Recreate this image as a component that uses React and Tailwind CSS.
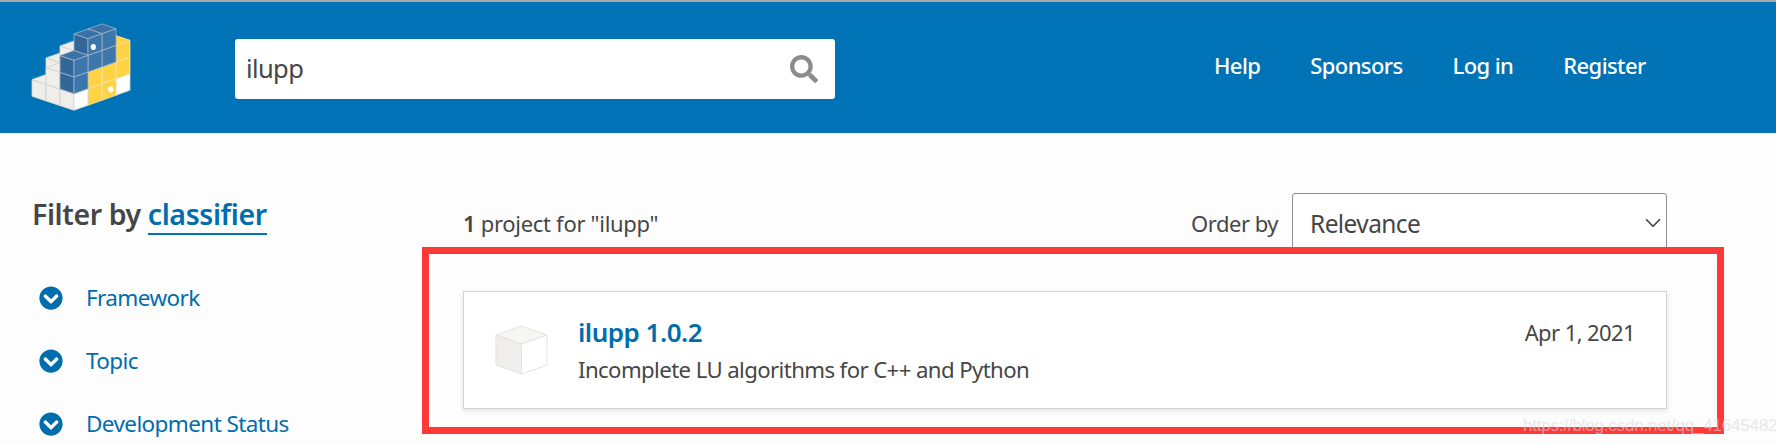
import { FaSearch, FaChevronCircleDown } from 'react-icons/fa'
import { ChevronDown } from 'lucide-react'

const BLUE = { top: '#3a72a8', left: '#336797', right: '#3b76ad', line: '#9fb3c6' }
const YELLOW = { top: '#ffd343', left: '#ffd343', right: '#ffd343', line: '#f3e4a8' }
const GRAY = { top: '#efeeea', left: '#efeeea', right: '#ffffff', line: '#d2d2d0' }
const WHITE = { top: '#ffffff', left: '#efeeea', right: '#ffffff', line: '#d2d2d0' }

const cubes = [
  [0, 0, 0, GRAY], [0, 1, 0, GRAY], [0, 2, 0, GRAY], [0, 1, 1, GRAY],
  [1, 2, 0, GRAY], [1, 2, 1, GRAY], [1, 1, 0, GRAY], [1, 1, 1, GRAY], [1, 1, 2, GRAY],
  [0, 0, 1, BLUE], [0, 0, 2, BLUE],
  [1, 0, 0, YELLOW], [1, 0, 1, YELLOW], [1, 0, 2, BLUE], [1, 0, 3, BLUE],
  [2, 0, 0, YELLOW], [2, 0, 1, YELLOW], [2, 0, 2, BLUE], [2, 0, 3, BLUE],
  [3, 0, 0, WHITE], [3, 0, 1, YELLOW], [3, 0, 2, YELLOW],
].sort((a, b) => b[0] + b[1] - (a[0] + a[1]) || a[2] - b[2])

const pt = (x, y, z) => `${74 + 14 * (x - y)},${108.3 - 5 * x - 4.67 * y - 16.67 * z}`

function Logo() {
  return (
    <svg width="100" height="90" viewBox="31 21 100 90" className="block shrink-0">
      {cubes.map(([x, y, z, c]) => (
        <g key={`${x}-${y}-${z}`} stroke={c.line} strokeWidth="0.8" strokeLinejoin="round">
          <polygon fill={c.left} points={`${pt(x, y, z)} ${pt(x, y + 1, z)} ${pt(x, y + 1, z + 1)} ${pt(x, y, z + 1)}`} />
          <polygon fill={c.right} points={`${pt(x, y, z)} ${pt(x + 1, y, z)} ${pt(x + 1, y, z + 1)} ${pt(x, y, z + 1)}`} />
          <polygon fill={c.top} points={`${pt(x, y, z + 1)} ${pt(x + 1, y, z + 1)} ${pt(x + 1, y + 1, z + 1)} ${pt(x, y + 1, z + 1)}`} />
        </g>
      ))}
      <ellipse cx="93.3" cy="45" rx="2.6" ry="3.1" fill="#fff" />
      <ellipse cx="110.7" cy="87.3" rx="2.6" ry="3.1" fill="#fff" />
    </svg>
  )
}

function PackageCube() {
  return (
    <svg width="53" height="50" viewBox="494 326 53 50" className="block shrink-0">
      <g stroke="#e3e3e0" strokeWidth="1" strokeLinejoin="round">
        <polygon fill="#f6f6f4" points="520,327 546,336 520.5,345 495,336" />
        <polygon fill="#efeeec" points="495,336 520.5,345 520.5,375 495,366" />
        <polygon fill="#ffffff" points="546,336 520.5,345 520.5,375 546,366" />
      </g>
    </svg>
  )
}

const navLinks = [
  { label: 'Help', cls: 'mr-[50px]' },
  { label: 'Sponsors', cls: 'mr-[50px]' },
  { label: 'Log in', cls: 'mr-[50px]' },
  { label: 'Register', cls: '' },
]

const filters = ['Framework', 'Topic', 'Development Status']

export default function App() {
  return (
    <div className="relative h-[444px] w-[1776px] overflow-hidden bg-[#fdfdfd] text-[#464646] font-['Noto_Sans','Liberation_Sans',sans-serif]">
      {/* header */}
      <header className="flex h-[133px] items-center border-t-2 border-[#a9a9a9] bg-[#0073b7] pl-[31px]">
        <Logo />
        <div className="ml-[104px] mt-[2px] flex h-[60px] w-[600px] items-center justify-between rounded-[3px] bg-white pl-[11px] pr-[17px]">
          <span className="text-[25.5px] tracking-[-0.6px]">ilupp</span>
          <FaSearch className="text-[28px] text-[#8c8c8c]" />
        </div>
        <nav className="mb-[5px] ml-[379px] flex text-[22px] font-medium tracking-[-0.6px] text-white">
          {navLinks.map(l => (
            <a key={l.label} className={l.cls}>{l.label}</a>
          ))}
        </nav>
      </header>

      <main className="flex">
        {/* sidebar */}
        <aside className="w-[463px] shrink-0 pl-[32px] pt-[59px]">
          <h2 className="text-[28.5px] leading-[44px] font-semibold tracking-[-0.4px]">
            Filter by <a className="border-b-2 border-[#0073b7] text-[#006dad]">classifier</a>
          </h2>
          <ul className="mt-[46px] pl-[7px]">
            {filters.map(f => (
              <li key={f} className="mb-[31px] flex h-[32px] items-center gap-[23px] text-[22.5px] tracking-[-0.6px] text-[#006dad]">
                <FaChevronCircleDown className="shrink-0 text-[24px]" />
                {f}
              </li>
            ))}
          </ul>
        </aside>

        {/* results */}
        <section className="w-[1204px] shrink-0">
          <div className="flex h-[158px] items-start justify-between pt-[60px]">
            <p className="mt-[14px] text-[22px] tracking-[-0.3px]"><b className="font-semibold">1</b> project for "ilupp"</p>
            <div className="flex items-center">
              <span className="text-[22px] tracking-[-0.5px]">Order by</span>
              <div className="ml-[14px] flex h-[60px] w-[375px] items-center justify-between rounded-[3px] border border-[#8e8e8e] bg-white pl-[17px] text-[24.5px] tracking-[-0.6px]">
                <span className="mt-[2px]">Relevance</span>
                <ChevronDown size={26} strokeWidth={1.6} className="text-[#464646]" />
              </div>
            </div>
          </div>
          <div className="flex h-[118px] items-start border border-[#d3d3d3] bg-white shadow-[0_2px_5px_rgba(0,0,0,0.1)]">
            <div className="flex h-full items-center pl-[31px] pr-[30px]">
              <PackageCube />
            </div>
            <div className="flex-1 pt-[24px]">
              <h3 className="text-[26px] leading-[32px] font-semibold tracking-[-0.5px] text-[#006dad]">ilupp 1.0.2</h3>
              <p className="mt-[7px] text-[22.2px] leading-[30px] tracking-[-0.6px]">Incomplete LU algorithms for C++ and Python</p>
            </div>
            <span className="mr-[31px] mt-[24px] text-[22px] tracking-[-0.6px]">Apr 1, 2021</span>
          </div>
        </section>
      </main>

      {/* red annotation box */}
      <div className="absolute left-[422px] top-[247px] h-[187px] w-[1302px] border-[7px] border-[#ff3838]" />

      {/* image watermark */}
      <span className="absolute left-[1523px] top-[413px] text-[17px] leading-[26px] tracking-[-0.2px] text-[#d8d8d8]/60 font-['Liberation_Sans',sans-serif]">
        https://blog.csdn.net/qq_41645482
      </span>
    </div>
  )
}
